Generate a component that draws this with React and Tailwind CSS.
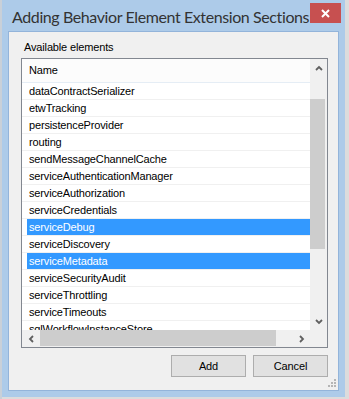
const items = [
  { name: 'dataContractSerializer' },
  { name: 'etwTracking' },
  { name: 'persistenceProvider' },
  { name: 'routing' },
  { name: 'sendMessageChannelCache' },
  { name: 'serviceAuthenticationManager' },
  { name: 'serviceAuthorization' },
  { name: 'serviceCredentials' },
  { name: 'serviceDebug', selected: true },
  { name: 'serviceDiscovery' },
  { name: 'serviceMetadata', selected: true },
  { name: 'serviceSecurityAudit' },
  { name: 'serviceThrottling' },
  { name: 'serviceTimeouts' },
  { name: 'sqlWorkflowInstanceStore' },
];

function Arrow({ dir }) {
  const d = {
    up: 'M1 5 L4 2 L7 5',
    down: 'M1 2 L4 5 L7 2',
    left: 'M5 1 L2 4 L5 7',
    right: 'M2 1 L5 4 L2 7',
  }[dir];
  const vertical = dir === 'up' || dir === 'down';
  return (
    <svg width={vertical ? 8 : 7} height={vertical ? 7 : 8} viewBox={vertical ? '0 0 8 7' : '0 0 7 8'}>
      <path d={d} fill="none" stroke="#606060" strokeWidth="1.8" />
    </svg>
  );
}

function Row({ name, selected }) {
  return (
    <div className="h-[17px] shrink-0 border-b border-[#f0f0f0] pl-[5px]">
      <div className={`h-[16px] pl-[2px] leading-[16px] whitespace-nowrap ${selected ? 'bg-[#3399ff] text-white' : 'text-black'}`}>
        {name}
      </div>
    </div>
  );
}

export default function App() {
  return (
    <div className="relative w-[349px] h-[399px] overflow-hidden bg-[#dcdcdc] font-['Liberation_Sans',Arial,sans-serif] text-[11px] tracking-[-0.15px]">
      {/* window behind, its heading cut at the top */}
      <div className="absolute top-0 left-[236px] w-[113px] h-[3px] overflow-hidden z-10">
        <div className="-mt-[14px] text-[17px] font-bold leading-[17px] text-[#111] whitespace-nowrap">
          Behavior: ... ExtensionElements
        </div>
      </div>

      <div className="flex h-full">
        <div className="w-[2px] bg-[#c9d0d8]" />
        <div className="flex flex-col w-[343px] h-[397px] bg-[#adcbe9]">
          {/* title bar */}
          <div className="flex h-[31px] shrink-0">
            <div className="flex-1 min-w-0 overflow-hidden pl-[10px] pt-[7px] text-[16px] leading-[20px] text-[#333] whitespace-nowrap font-['Lato',sans-serif] tracking-[-0.4px]">
              Adding Behavior Element Extension Sections
            </div>
            <div className="mt-[3px] mr-[4px] w-[31px] h-[20px] shrink-0 bg-[#c75050] flex items-center justify-center">
              <svg width="9" height="9" viewBox="0 0 9 9">
                <path d="M1 1 L8 8 M8 1 L1 8" stroke="#fff" strokeWidth="2" />
              </svg>
            </div>
          </div>

          {/* client area */}
          <div className="relative mx-[6px] mb-[6px] flex-1 border border-[#93b4da] bg-[#f0f0f0] flex flex-col pl-[12px]">
            <div className="pl-[3px] pt-[9px] h-[26px] leading-[13px] text-black">Available elements</div>

            <div className="w-[307px] h-[290px] border border-[#828790] bg-white flex flex-col">
              <div className="flex h-[271px]">
                <div className="w-[288px] flex flex-col overflow-hidden">
                  <div className="h-[24px] shrink-0 bg-[#fcfcfc] border-b border-[#e5edf5] pl-[7px] leading-[23px] text-black">
                    Name
                  </div>
                  {items.map((it) => (
                    <Row key={it.name} {...it} />
                  ))}
                </div>
                <div className="w-[17px] bg-[#f0f0f0] flex flex-col">
                  <div className="h-[17px] flex items-center justify-center pt-[2px]">
                    <Arrow dir="up" />
                  </div>
                  <div className="h-[23px]" />
                  <div className="h-[150px] mr-[2px] bg-[#cdcdcd]" />
                  <div className="flex-1" />
                  <div className="h-[17px] flex items-center justify-center">
                    <Arrow dir="down" />
                  </div>
                </div>
              </div>
              <div className="flex h-[17px] bg-[#f0f0f0]">
                <div className="w-[18px] flex items-center justify-center">
                  <Arrow dir="left" />
                </div>
                <div className="w-[236px] mb-[1px] bg-[#cdcdcd]" />
                <div className="flex-1" />
                <div className="w-[17px] flex items-center justify-center">
                  <Arrow dir="right" />
                </div>
                <div className="w-[17px]" />
              </div>
            </div>

            <div className="w-[307px] flex justify-end gap-[7px] mt-[7px]">
              <button className="w-[75px] h-[22px] border border-[#adadad] bg-[#e1e1e1] text-black leading-[20px]">Add</button>
              <button className="w-[75px] h-[22px] border border-[#adadad] bg-[#e1e1e1] text-black leading-[20px]">Cancel</button>
            </div>

            {/* size grip */}
            <svg className="absolute right-[1px] bottom-[2px]" width="9" height="9" viewBox="0 0 9 9">
              <g fill="#b5b5b5">
                <rect x="6" y="0" width="2" height="2" />
                <rect x="3" y="3" width="2" height="2" />
                <rect x="6" y="3" width="2" height="2" />
                <rect x="0" y="6" width="2" height="2" />
                <rect x="3" y="6" width="2" height="2" />
                <rect x="6" y="6" width="2" height="2" />
              </g>
            </svg>
          </div>
        </div>
      </div>
    </div>
  );
}
